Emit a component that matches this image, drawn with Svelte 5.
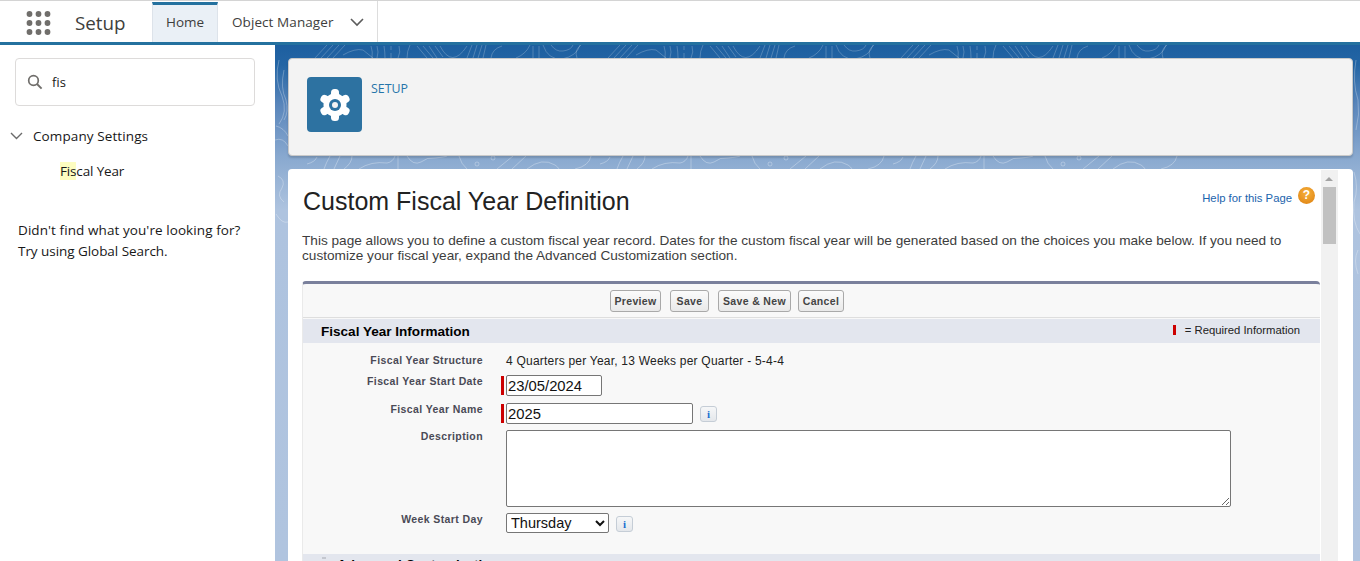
<script>
  const topTile = [
    "M8 58L20 45", "M14 58L26 45", "M20 58L32 45", "M26 58L38 45",
    "M36 55q12-7 20-5l10 8", "M64 46q2 6 1 12", "M70 46q2 6 0 12", "M77 46q1 6 1 12",
    "M84 46v4m0 3v5", "M92 46q2 6-1 12", "M100 58q0-7 3-13",
    "M110 46l10 12", "M116 46l10 12", "M122 46l8 12", "M128 46l8 11", "M133 46q12 23 27 0",
    "M160 58l5-13", "M166 58l4-13", "M171 58l4-13", "M176 58l3-13", "M195 46q-10 3-11 12",
    "M209 58q10-4 14-13", "M226 46v12", "M232 46v12", "M236 45q5 15 19 14q15-3 18-14", "M244 45q5 7 12 6q8-1 10-6", "M270 58q-3-8 4-13"
  ];
  const lowTile = [
    "M0 164q8-2 10-7", "M17 169q2-6 6-13", "M27 169l6-13", "M37 169q8-6 8-13",
    "M52 169q12-8 28-6q6-1 8-7", "M91 156v13", "M100 156q6 10 14 6q6-5 14-4q10-1 12-2",
    "M152 156q2 8 8 13", "M190 169l16-13", "M205 169l14-13", "M220 169q15-12 28-4q3 2 4 4",
    "M268 169q14-3 16-13"
  ];
  const sideLines = [
    "M279 60q-5 20 3 36q6 16-3 28", "M284 70q-4 18 2 30q3 12-2 20", "M276 126q8 2 12 10", "M275 140q8-3 13 6",
    "M278 176q8 4 4 12q-6 8 2 14", "M276 214q6 10 12 8", "M1356 60q-4 22 2 40q2 14-2 30", "M1354 172q5 16 0 30q-2 20 6 32", "M1358 250q-5 10 0 24"
  ];
  const offsets = [-2, 1, 2, 3];
  const circles = [[770, 164], [786, 158], [1063, 164], [1079, 158], [477, 164], [493, 158]];
</script>

<div class="page">
  <header class="top">
    <svg class="launcher" width="26" height="24" viewBox="0 0 26 24" aria-hidden="true">
      {#each [3, 12, 21] as cy}
        {#each [3.5, 12.5, 21.5] as cx}
          <circle {cx} {cy} r="2.9" fill="#706e6b" />
        {/each}
      {/each}
    </svg>
    <div class="app">Setup</div>
    <nav class="tabs">
      <div class="tab home">Home</div>
      <div class="tab om">
        <span>Object Manager</span>
        <svg width="14" height="9" viewBox="0 0 14 9" aria-hidden="true"><path d="M1 1l6 6 6-6" fill="none" stroke="#5c5c5c" stroke-width="1.6" /></svg>
      </div>
    </nav>
  </header>

  <div class="body">
    <aside class="side">
      <div class="search">
        <svg width="16" height="16" viewBox="0 0 16 16" aria-hidden="true"><circle cx="6.5" cy="6.5" r="4.8" fill="none" stroke="#706e6b" stroke-width="1.7" /><path d="M10 10l4.6 4.6" stroke="#706e6b" stroke-width="1.9" /></svg>
        <span>fis</span>
      </div>
      <div class="tree-head">
        <svg width="13" height="8" viewBox="0 0 13 8" aria-hidden="true"><path d="M1 1l5.500 5.500L12 1" fill="none" stroke="#6b6b6b" stroke-width="1.400" /></svg>
        <span>Company Settings</span>
      </div>
      <div class="tree-item"><mark>Fis</mark>cal Year</div>
      <p class="hint">Didn't find what you're looking for?<br /><span>Try using Global Search.</span></p>
    </aside>

    <main class="main">
      <svg class="contours" width="1085" height="516" viewBox="275 45 1085 516" aria-hidden="true">
        <g fill="none" stroke="#fff" stroke-width="1">
          {#each offsets as o}
            <g transform="translate({o * 293 + 14} 0)" stroke-opacity="0.22">
              {#each topTile as d}<path {d} />{/each}
            </g>
            <g transform="translate({o * 293 + 14} 0)" stroke-opacity="0.3">
              {#each lowTile as d}<path {d} />{/each}
            </g>
          {/each}
          <g stroke-opacity="0.28">
            {#each sideLines as d}<path {d} />{/each}
            {#each circles as [cx, cy]}<circle {cx} {cy} r="2" />{/each}
          </g>
        </g>
      </svg>

      <section class="hero">
        <div class="hero-icon">
          <svg width="36" height="36" viewBox="0 0 36 36" aria-hidden="true">
            <g fill="#fff">
              <circle cx="18" cy="18" r="11.500" />
              {#each [0, 60, 120, 180, 240, 300] as a}
                <rect x="14" y="2" width="8" height="9" rx="3.500" transform="rotate({a} 18 18)" />
              {/each}
            </g>
            <circle cx="18" cy="18" r="6" fill="#2d72a1" />
            <circle cx="18" cy="18" r="3" fill="#f3f3f3" />
          </svg>
        </div>
        <div class="crumb">SETUP</div>
      </section>

      <section class="card">
        <div class="content">
          <div class="title-row">
            <h1>Custom Fiscal Year Definition</h1>
            <div class="help">
              <span>Help for this Page</span>
              <span class="help-q">?</span>
            </div>
          </div>
          <p class="intro">This page allows you to define a custom fiscal year record. Dates for the custom fiscal year will be generated based on the choices you make below. If you need to customize your fiscal year, expand the Advanced Customization section.</p>

          <div class="block">
            <div class="buttons">
              <button class="b-preview">Preview</button>
              <button class="b-save">Save</button>
              <button class="b-new">Save &amp; New</button>
              <button class="b-cancel">Cancel</button>
            </div>
            <div class="section-head">
              <h3>Fiscal Year Information</h3>
              <div class="legend"><i class="req-mark small"></i>= Required Information</div>
            </div>
            <div class="form">
              <div class="row r-structure">
                <div class="label">Fiscal Year Structure</div>
                <div class="value">4 Quarters per Year, 13 Weeks per Quarter - 5-4-4</div>
              </div>
              <div class="row r-date">
                <div class="label">Fiscal Year Start Date</div>
                <div class="field"><i class="req-mark"></i><input class="date" value="23/05/2024" /></div>
              </div>
              <div class="row r-name">
                <div class="label">Fiscal Year Name</div>
                <div class="field"><i class="req-mark"></i><input class="name" value="2025" /><span class="info">i</span></div>
              </div>
              <div class="row r-desc">
                <div class="label">Description</div>
                <div class="field"><textarea></textarea></div>
              </div>
              <div class="row r-week">
                <div class="label">Week Start Day</div>
                <div class="field">
                  <select><option>Thursday</option></select>
                  <span class="info">i</span>
                </div>
              </div>
            </div>
            <div class="section-head adv">
              <i class="twist"></i>
              <h3>Advanced Customization</h3>
            </div>
          </div>
        </div>
        <div class="scrollbar">
          <span class="arrow"></span>
          <span class="thumb"></span>
        </div>
      </section>
    </main>
  </div>
</div>

<style>
  :global(body) {
    margin: 0;
    overflow: hidden;
    background: #fff;
  }
  .page {
    width: 1360px;
    height: 561px;
    overflow: hidden;
    display: flex;
    flex-direction: column;
    font-family: "Open Sans", "Liberation Sans", sans-serif;
    color: #181818;
  }
  .top {
    height: 45px;
    box-sizing: border-box;
    flex: none;
    display: flex;
    align-items: stretch;
    background: #fff;
    border-top: 1px solid #d4d4d4;
    border-bottom: 3px solid #24719f;
  }
  .launcher {
    margin: 10px 0 0 26px;
  }
  .app {
    margin-left: 23px;
    width: 77px;
    font-size: 18.800px;
    line-height: 44px;
    color: #3e3e3c;
  }
  .tabs {
    display: flex;
  }
  .tab {
    display: flex;
    align-items: center;
    font-size: 13.500px;
    color: #3e3e3c;
    box-sizing: border-box;
  }
  .home {
    width: 66px;
    justify-content: center;
    background: #eaf0f6;
    border-top: 3px solid #24719f;
    border-left: 1px solid #dde3ea;
    border-right: 1px solid #dde3ea;
    margin-top: 1px;
    padding-bottom: 4px;
  }
  .om {
    width: 160px;
    padding: 0 0 0 14px;
    gap: 16px;
    letter-spacing: 0.08px;
    border-right: 1px solid #dddddd;
  }
  .om svg {
    margin-top: 2px;
  }
  .body {
    flex: 1;
    display: flex;
    min-height: 0;
  }
  .side {
    width: 275px;
    flex: none;
    box-sizing: border-box;
    padding-top: 13px;
    font-size: 13.500px;
    color: #181818;
    background: #fff;
  }
  .search {
    margin-left: 15px;
    width: 240px;
    height: 48px;
    box-sizing: border-box;
    border: 1px solid #dddbda;
    border-radius: 4px;
    display: flex;
    align-items: center;
    gap: 9px;
    padding-left: 11px;
    font-size: 13px;
  }
  .tree-head {
    display: flex;
    align-items: center;
    gap: 10px;
    margin: 20px 0 0 10px;
    height: 20px;
    letter-spacing: 0.1px;
  }
  .tree-item {
    margin: 15px 0 0 60px;
    height: 20px;
    line-height: 20px;
    letter-spacing: -0.15px;
  }
  mark {
    background: #fdfdc0;
    color: inherit;
  }
  .hint {
    margin: 39px 0 0 18px;
    line-height: 21px;
    font-size: 13.500px;
    letter-spacing: 0.08px;
  }
  .hint span {
    letter-spacing: -0.05px;
  }
  .main {
    flex: 1;
    position: relative;
    min-width: 0;
    box-sizing: border-box;
    padding: 13px 7px 0 13px;
    display: flex;
    flex-direction: column;
    gap: 13px;
    background: linear-gradient(#1d5fa0 0, #2465a4 20px, #5a86bb 60px, #88a8cf 111px, #aec3df 165px, #b0c4df 100%);
  }
  .contours {
    position: absolute;
    left: 0;
    top: 0;
  }
  .hero {
    position: relative;
    height: 98px;
    flex: none;
    box-sizing: border-box;
    background: #f3f3f3;
    border: 1px solid #c9c9c9;
    border-radius: 4px;
    box-shadow: 0 2px 2px rgba(0, 0, 0, 0.15);
    padding: 18px 0 0 18px;
    display: flex;
    gap: 9px;
  }
  .hero-icon {
    width: 55px;
    height: 55px;
    background: #2d72a1;
    border-radius: 4px;
    display: flex;
    align-items: center;
    justify-content: center;
  }
  .crumb {
    font-size: 12.400px;
    line-height: 16px;
    margin-top: 4px;
    color: #2574a9;
  }
  .card {
    position: relative;
    flex: 1;
    display: flex;
    background: #fff;
    border-radius: 4px 4px 0 0;
    padding: 1px 15px 0 0;
    min-height: 0;
    font-family: "Liberation Sans", Arial, sans-serif;
  }
  .content {
    flex: 1;
    min-width: 0;
    padding: 0 0 0 14px;
    overflow: hidden;
  }
  .title-row {
    display: flex;
    justify-content: space-between;
    height: 63px;
    padding-right: 6px;
  }
  h1 {
    margin: 16px 0 0 1px;
    font-size: 25px;
    font-weight: 400;
    line-height: 30px;
    color: #222;
  }
  .help {
    display: flex;
    align-items: flex-start;
    gap: 6px;
    margin-top: 17px;
    font-size: 11.300px;
    color: #1b64ad;
  }
  .help span:first-child {
    margin-top: 5px;
  }
  .help-q {
    width: 17px;
    height: 17px;
    border-radius: 50%;
    background: radial-gradient(circle at 50% 35%, #f6b13d, #dd7f0e);
    color: #fff;
    font-weight: 700;
    font-size: 12px;
    line-height: 17px;
    text-align: center;
  }
  .intro {
    margin: 0;
    font-size: 13.630px;
    line-height: 15px;
    color: #3d3d3d;
    width: 1000px;
    height: 48px;
  }
  .block {
    margin-right: 1px;
    background: #f8f8f8;
    border-top: 3px solid #7a809c;
    border-left: 1px solid #eaeaea;
    border-radius: 4px 4px 0 0;
  }
  .buttons {
    height: 34px;
    box-sizing: border-box;
    padding: 6px 0 0 307px;
    display: flex;
    border-bottom: 1px solid #dedede;
  }
  button {
    height: 22px;
    box-sizing: border-box;
    padding: 0;
    border: 1px solid #a9a9a9;
    border-radius: 3px;
    background: linear-gradient(#fbfbfb, #e9e9e9);
    font: 700 10.500px "Liberation Sans", Arial, sans-serif;
    letter-spacing: 0.35px;
    color: #444;
  }
  .b-preview {
    width: 51px;
  }
  .b-save {
    width: 39px;
    margin-left: 9px;
  }
  .b-new {
    width: 73px;
    margin-left: 9px;
  }
  .b-cancel {
    width: 46px;
    margin-left: 7px;
  }
  .section-head {
    margin-top: 1px;
    height: 24px;
    background: #e3e6ee;
    display: flex;
    justify-content: space-between;
    align-items: center;
    padding: 0 20px 0 18px;
  }
  h3 {
    margin: 0;
    font-size: 13.550px;
    font-weight: 700;
    line-height: 25px;
    color: #000;
  }
  .legend {
    display: flex;
    align-items: center;
    margin-top: -2px;
    font-size: 11.300px;
    color: #222;
  }
  .req-mark {
    display: block;
    width: 3px;
    height: 19px;
    background: #c00;
    flex: none;
    margin-right: 2px;
  }
  .req-mark.small {
    height: 10px;
    margin-right: 9px;
  }
  .form {
    height: 211px;
    box-sizing: border-box;
    padding-top: 10px;
  }
  .row {
    display: flex;
  }
  .label {
    width: 180px;
    box-sizing: border-box;
    text-align: right;
    font-size: 10.500px;
    letter-spacing: 0.4px;
    font-weight: 700;
    color: #4a4a56;
    flex: none;
  }
  .value {
    margin-left: 23px;
    font-size: 12px;
    letter-spacing: 0.22px;
    line-height: 16px;
    color: #222;
  }
  .field {
    margin-left: 18px;
    display: flex;
    align-items: flex-start;
  }
  .r-structure {
    height: 15px;
    line-height: 15px;
  }
  .r-date {
    margin-top: 7px;
    height: 21px;
  }
  .r-date .req-mark,
  .r-name .req-mark {
    margin-top: 1px;
    height: 19px;
  }
  .r-name {
    margin-top: 7px;
    height: 21px;
  }
  .r-name .label,
  .r-date .label {
    line-height: 13px;
  }
  .r-desc {
    margin-top: 6px;
    height: 77px;
  }
  .r-desc .field {
    margin-left: 23px;
  }
  .r-week {
    margin-top: 6px;
    height: 20px;
  }
  .r-week .field {
    margin-left: 23px;
  }
  .r-desc .label {
    line-height: 13px;
  }
  input, textarea, select {
    box-sizing: border-box;
    border: 1px solid #767676;
    border-radius: 2px;
    background: #fff;
    font: 14.500px "Liberation Sans", Arial, sans-serif;
    color: #111;
    margin: 0;
  }
  input {
    height: 21px;
    padding: 0 1px;
    font-size: 14.800px;
  }
  input.date {
    width: 96px;
  }
  input.name {
    width: 187px;
  }
  textarea {
    display: block;
    width: 725px;
    height: 77px;
    padding: 2px;
  }
  select {
    width: 103px;
    height: 20px;
    padding: 0;
  }
  .info {
    margin: 3px 0 0 7px;
    width: 17px;
    height: 16px;
    box-sizing: border-box;
    border: 1px solid #c5cdd6;
    border-radius: 3px;
    background: linear-gradient(#f6f7f8, #e4e7eb);
    color: #1a6fd0;
    font: 700 11px/14px "Liberation Serif", serif;
    text-align: center;
  }
  .adv {
    margin-top: 0;
    padding-left: 19px;
    justify-content: flex-start;
    align-items: flex-start;
    gap: 11px;
  }
  .twist {
    width: 4px;
    height: 2px;
    margin-top: 3px;
    background: #c4c7cf;
  }
  .adv h3 {
    line-height: 20px;
    margin-top: 0;
    padding-top: 1px;
  }
  .scrollbar {
    width: 17px;
    flex: none;
    background: #f1f1f1;
    position: relative;
  }
  .arrow {
    position: absolute;
    left: 4px;
    top: 7px;
    width: 0;
    height: 0;
    border-left: 4px solid transparent;
    border-right: 4px solid transparent;
    border-bottom: 4px solid #a3a3a3;
  }
  .thumb {
    position: absolute;
    left: 2px;
    top: 17px;
    width: 13px;
    height: 57px;
    background: #c1c1c1;
  }
</style>
